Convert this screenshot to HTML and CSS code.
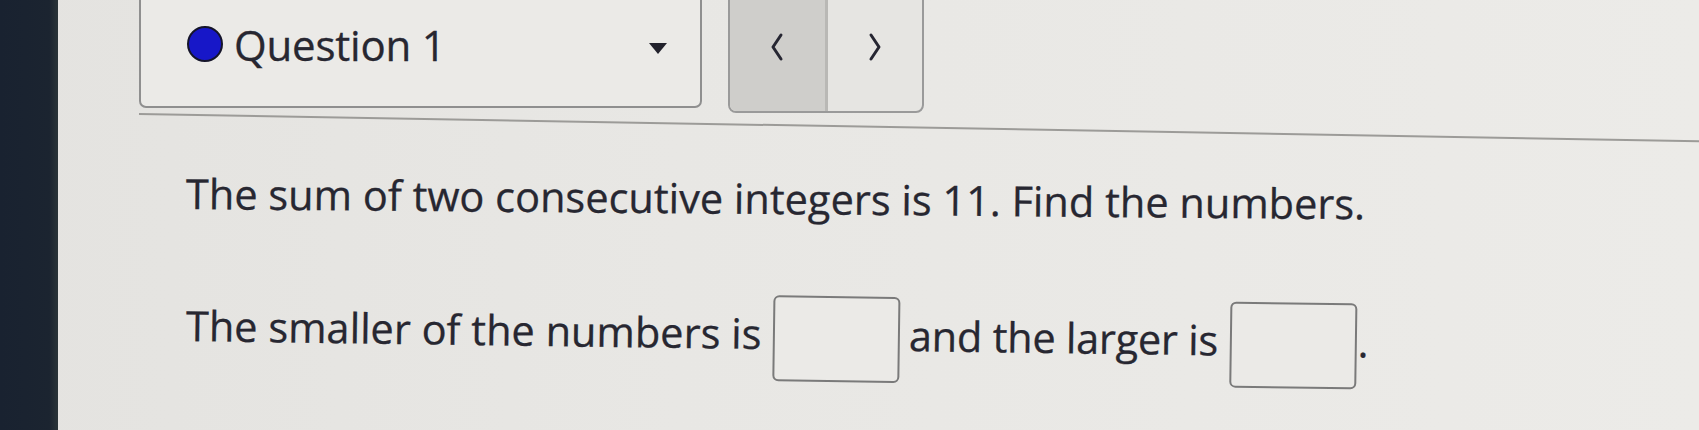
FILE: index.html
```html
<!DOCTYPE html>
<html>
<head>
<meta charset="utf-8">
<link rel="stylesheet" href="styles.css">
</head>
<body>
<div class="page">
  <div class="bezel"></div>
  <main class="main">
    <div class="topbar">
      <div class="select">
        <span class="dot"></span>
        <span class="qlabel">Question 1</span>
        <span class="caret"></span>
      </div>
      <div class="nav">
        <button class="navbtn prev"><svg width="18" height="30" viewBox="0 0 18 30"><path d="M13 3 L5 15 L13 27" fill="none" stroke="#262632" stroke-width="3" stroke-linecap="round" stroke-linejoin="round"/></svg></button>
        <button class="navbtn next"><svg width="18" height="30" viewBox="0 0 18 30"><path d="M5 3 L13 15 L5 27" fill="none" stroke="#262632" stroke-width="3" stroke-linecap="round" stroke-linejoin="round"/></svg></button>
      </div>
    </div>
    <div class="rule"></div>
    <section class="question">
      <p class="stem">The sum of two consecutive integers is 11. Find the numbers.</p>
      <p class="answer">The smaller of the numbers is <span class="box"></span> <span class="tail">and the larger is</span> <span class="box box2"></span>.</p>
    </section>
  </main>
</div>
</body>
</html>
```
FILE: styles.css
```css
html, body {
  margin: 0;
  padding: 0;
  width: 1699px;
  height: 430px;
  overflow: hidden;
  background: #e7e6e3;
}
.page {
  display: flex;
  height: 430px;
  font-family: "Open Sans", "Noto Sans", sans-serif;
  color: #272731;
  background: linear-gradient(90deg, #e4e3e0 0%, #e8e7e4 40%, #ecebe8 100%);
}
.bezel {
  width: 58px;
  flex: none;
  background: linear-gradient(90deg, #192230 0%, #1b2430 85%, #2a3438 100%);
}
.main {
  flex: 1;
  padding-left: 81px;
}
.topbar {
  display: flex;
  gap: 26px;
  margin-top: -8px;
}
.select {
  width: 563px;
  height: 116px;
  box-sizing: border-box;
  border: 2px solid #8f8f8f;
  border-radius: 7px;
  background: #ebeae7;
  display: flex;
  align-items: center;
  padding: 0 30px 12px 46px;
}
.dot {
  width: 32px;
  height: 32px;
  border-radius: 50%;
  background: #1717c8;
  border: 2px solid #15152a;
  flex: none;
}
.qlabel {
  font-size: 42px;
  margin-left: 11px;
  letter-spacing: -0.2px;
  flex: 1;
  -webkit-text-stroke: 0.3px #272731;
}
.caret {
  width: 0;
  height: 0;
  border-left: 9px solid transparent;
  border-right: 9px solid transparent;
  border-top: 11px solid #22222c;
  margin-top: 8px;
  margin-right: 3px;
}
.nav {
  display: flex;
  width: 196px;
  height: 121px;
  box-sizing: border-box;
  border: 2px solid #9a9a9a;
  border-radius: 8px;
  overflow: hidden;
  background: #e6e5e2;
}
.navbtn {
  flex: 1;
  border: 0;
  margin: 0;
  padding: 0 0 12px 0;
  display: flex;
  align-items: center;
  justify-content: center;
  background: transparent;
}
.prev {
  background: #cfcecb;
  border-right: 3px solid #b9b8b5;
}
.rule {
  height: 2px;
  width: 1580px;
  background: #9c9b98;
  margin-top: 0;
  transform-origin: left center;
  transform: rotate(1deg);
}
.question {
  padding-left: 47px;
}
.stem {
  margin: 50px 0 0 0;
  font-size: 41.5px;
  line-height: 56px;
  -webkit-text-stroke: 0.3px #272731;
  transform-origin: left center;
  transform: rotate(0.5deg);
}
.answer {
  margin: 56px 0 0 0;
  font-size: 41.5px;
  line-height: 96px;
  -webkit-text-stroke: 0.3px #272731;
  transform-origin: left center;
  transform: rotate(0.8deg);
}
.tail {
  letter-spacing: -0.25px;
}
.box {
  display: inline-block;
  width: 127px;
  height: 86px;
  box-sizing: border-box;
  border: 2px solid #7a7a7a;
  border-radius: 6px;
  background: #ebeae7;
  vertical-align: middle;
  margin: 0 -2px 0 1px;
  -webkit-text-stroke: 0;
}
.box2 {
  margin-right: 1px;
}
```
